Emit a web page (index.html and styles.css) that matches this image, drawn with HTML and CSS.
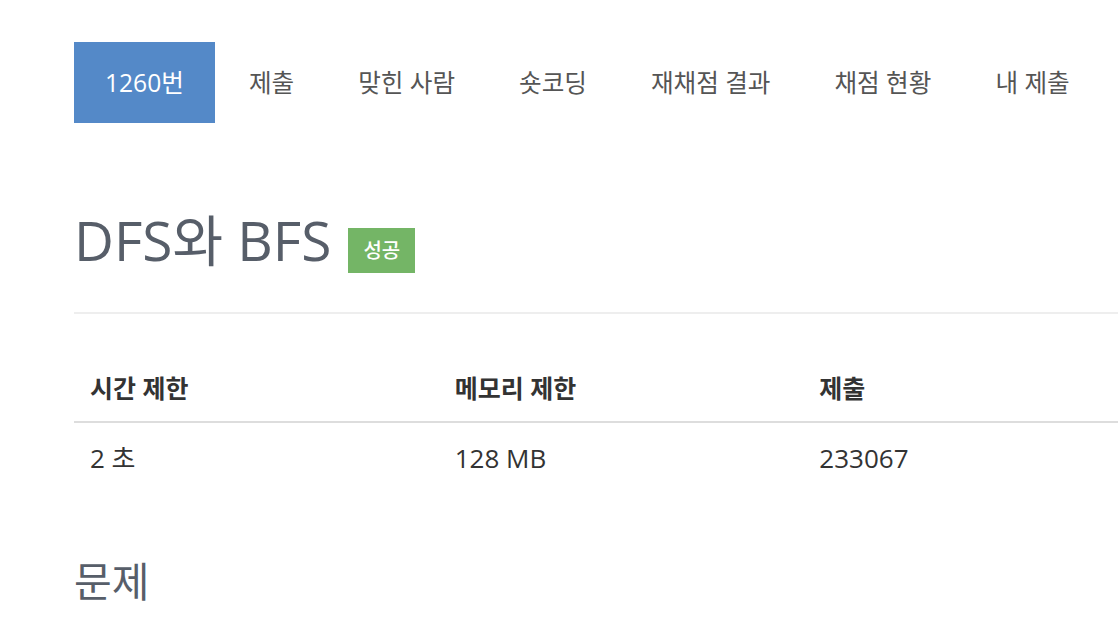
FILE: index.html
```html
<!DOCTYPE html>
<html lang="ko">
<head>
<meta charset="utf-8">
<title>DFS와 BFS</title>
<link rel="stylesheet" href="styles.css">
</head>
<body>
<div class="wrapper">
  <ul class="tabs">
    <li class="tab active"><a href="#">1260번</a></li>
    <li class="tab"><a href="#">제출</a></li>
    <li class="tab"><a href="#">맞힌 사람</a></li>
    <li class="tab"><a href="#">숏코딩</a></li>
    <li class="tab"><a href="#">재채점 결과</a></li>
    <li class="tab"><a href="#">채점 현황</a></li>
    <li class="tab"><a href="#">내 제출</a></li>
  </ul>

  <div class="page-header">
    <h1 class="title"><span class="title-text">DFS와 BFS</span><span class="badge">성공</span></h1>
  </div>

  <table class="info">
    <colgroup>
      <col class="col-fixed">
      <col class="col-fixed">
      <col>
    </colgroup>
    <thead>
      <tr><th>시간 제한</th><th>메모리 제한</th><th>제출</th></tr>
    </thead>
    <tbody>
      <tr><td>2 초</td><td>128 MB</td><td>233067</td></tr>
    </tbody>
  </table>

  <h2 class="section-title">문제</h2>
</div>
</body>
</html>
```

FILE: styles.css
```css
html, body {
  margin: 0;
  padding: 0;
  background: #fff;
}
body {
  font-family: "Open Sans", "Noto Sans CJK KR", sans-serif;
  color: #333;
  overflow: hidden;
}
.wrapper {
  padding-left: 74px;
  padding-top: 42px;
}
.tabs {
  list-style: none;
  margin: 0;
  padding: 0;
  display: flex;
  gap: 4px;
}
.tab a {
  display: block;
  padding: 0 30px;
  height: 81px;
  line-height: 81px;
  font-size: 24.6px;
  color: #555;
  text-decoration: none;
}
.tab.active a {
  background: #5489c8;
  color: #fff;
  padding: 0 31px;
}
.page-header {
  margin-top: 87px;
  border-bottom: 2px solid #eee;
  padding-bottom: 39px;
}
.title {
  margin: 0;
  display: flex;
  align-items: flex-start;
  font-size: 55px;
  font-weight: 400;
  line-height: 60px;
  color: #575e69;
}
.badge {
  margin-left: 17px;
  margin-top: 18px;
  background: #74b566;
  color: #fff;
  font-size: 20px;
  font-weight: 500;
  line-height: 45px;
  height: 45px;
  padding: 0 15px;
}
.info {
  margin-top: 40px;
  width: 100%;
  border-collapse: collapse;
  table-layout: fixed;
}
.col-fixed {
  width: 364.67px;
}
.info th,
.info td {
  text-align: left;
  padding: 14px 16px;
  line-height: 40px;
}
.info th {
  font-size: 25px;
  font-weight: 700;
  color: #333;
  padding-bottom: 13px;
  border-bottom: 2px solid #ddd;
}
.info td {
  font-size: 26px;
  color: #333;
  padding-top: 15px;
}
.section-title {
  margin: 67px 0 0;
  font-size: 41px;
  font-weight: 400;
  line-height: 44px;
  color: #575e69;
}
```
